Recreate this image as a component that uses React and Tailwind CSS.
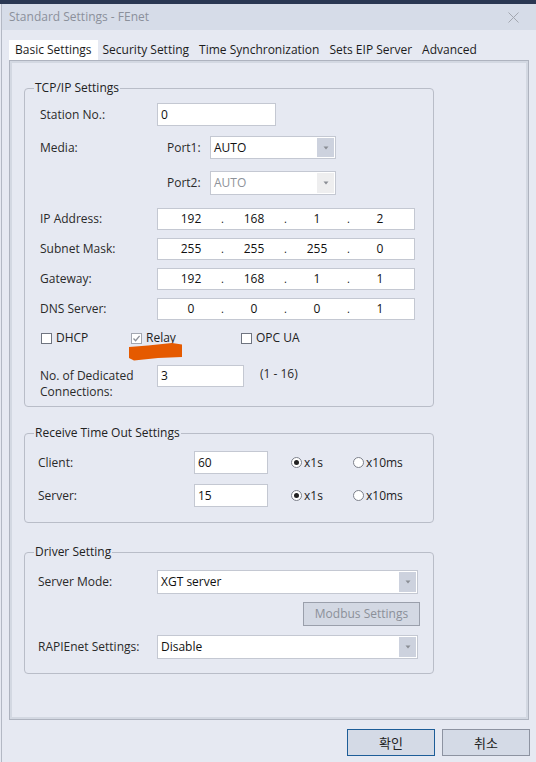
import React from 'react'

const tabs = ['Basic Settings', 'Security Setting', 'Time Synchronization', 'Sets EIP Server', 'Advanced']

function TextBox({ value, className = '' }) {
  return (
    <div className={`h-full border border-[#c4c8d2] bg-white pl-[3px] flex items-center text-[#111] ${className}`}>
      {value}
    </div>
  )
}

function Select({ value, disabled, className = '' }) {
  return (
    <div className={`h-full border border-[#c4c8d2] bg-white flex items-center p-px ${className}`}>
      <span className={`flex-1 pl-[2px] ${disabled ? 'text-[#8e9299]' : 'text-[#111]'}`}>{value}</span>
      <span className={`w-[17px] h-full flex items-center justify-center ${disabled ? 'bg-[#eeeeef]' : 'bg-[#cdd2de]'}`}>
        <svg width="6" height="4" viewBox="0 0 6 4">
          <path d="M0.5 0.5 L5.5 0.5 L3 3.5 Z" fill="#8a8d94" />
        </svg>
      </span>
    </div>
  )
}

function IpBox({ parts }) {
  return (
    <div className="h-full w-[258px] border border-[#c4c8d2] bg-white flex items-center pl-[15px] text-[#111]">
      {parts.map((p, i) => (
        <React.Fragment key={i}>
          {i > 0 && <span className="w-[27px] text-center text-[11px]">.</span>}
          <span className="w-[36px] text-center">{p}</span>
        </React.Fragment>
      ))}
    </div>
  )
}

function Check({ label, checked, className = '' }) {
  return (
    <div className={`flex items-center ${className}`}>
      <span className={`w-[11px] h-[11px] border bg-white flex items-center justify-center ${checked ? 'border-[#a3a7b1]' : 'border-[#6f7480]'}`}>
        {checked && (
          <svg width="9" height="9" viewBox="0 0 9 9">
            <path d="M1.5 4.5 L3.6 6.7 L7.6 1.8" fill="none" stroke="#8c9099" strokeWidth="1.3" />
          </svg>
        )}
      </span>
      <span className="ml-[4px] text-[#222]">{label}</span>
    </div>
  )
}

function Radio({ on, label, className = '' }) {
  return (
    <div className={`flex items-center ${className}`}>
      <span className="w-[11px] h-[11px] rounded-full border border-[#7d818b] bg-white flex items-center justify-center">
        {on && <span className="w-[5px] h-[5px] rounded-full bg-[#222]" />}
      </span>
      <span className="ml-[2px] text-[#222]">{label}</span>
    </div>
  )
}

function Group({ title, children, className = '', inner = '' }) {
  return (
    <fieldset className={`w-[410px] border border-[#b9bdc8] rounded-[4px] ${className}`}>
      <legend className="ml-[9px] px-[1px] leading-[16px] text-[#222]">{title}</legend>
      <div className={inner}>{children}</div>
    </fieldset>
  )
}

export default function App() {
  return (
    <div className="relative w-[536px] h-[762px] overflow-hidden bg-[#e6e9f2] text-[12px] leading-[16px] text-[#2a2a2a] font-['Open_Sans','Noto_Sans_CJK_KR',sans-serif]">
      <div className="h-[4px] bg-[#2a3752]" />
      <div className="h-[758px] border-l border-[#b3b8c4] ml-px">
        {/* title bar */}
        <div className="h-[26px] bg-[#d6dce8] flex items-center pl-[7px] pr-[17px]">
          <span className="flex-1 text-[12px] text-[#8b909b]">Standard Settings - FEnet</span>
          <svg width="11" height="11" viewBox="0 0 11 11">
            <path d="M0.5 0.5 L10.5 10.5 M10.5 0.5 L0.5 10.5" stroke="#a3a7b0" strokeWidth="1" />
          </svg>
        </div>

        {/* tabs */}
        <div className="pt-[10px] pl-[7px] flex h-[30px]">
          {tabs.map((t, i) => (
            <div
              key={t}
              className={`h-[20px] flex items-center text-[12px] text-[#1c1c1c] ${i === 0 ? 'bg-white px-[6px]' : 'px-[5px]'}`}
            >
              {t}
            </div>
          ))}
        </div>

        {/* panel */}
        <div className="ml-[7px] w-[520px] h-[660px] border border-[#aeb3bf] shadow-[inset_0_0_0_2px_#d3d8e2] pl-[14px] pt-[19px]">
          <Group title="TCP/IP Settings" inner="pl-[15px] pb-[6px]">
            <div className="mt-[7px] h-[23px] flex items-center">
              <span className="w-[117px]">Station No.:</span>
              <TextBox value="0" className="w-[119px]" />
            </div>
            <div className="mt-[10px] h-[23px] flex items-center">
              <span className="w-[127px]">Media:</span>
              <span className="w-[43px]">Port1:</span>
              <Select value="AUTO" className="w-[126px]" />
            </div>
            <div className="mt-[12px] h-[24px] flex items-center">
              <span className="w-[127px]" />
              <span className="w-[43px]">Port2:</span>
              <Select value="AUTO" disabled className="w-[126px]" />
            </div>
            {[
              ['IP Address:', ['192', '168', '1', '2'], 'mt-[13px]'],
              ['Subnet Mask:', ['255', '255', '255', '0'], 'mt-[8px]'],
              ['Gateway:', ['192', '168', '1', '1'], 'mt-[8px]'],
              ['DNS Server:', ['0', '0', '0', '1'], 'mt-[8px]'],
            ].map(([label, parts, mt]) => (
              <div key={label} className={`${mt} h-[22px] flex items-center`}>
                <span className="w-[117px]">{label}</span>
                <IpBox parts={parts} />
              </div>
            ))}
            <div className="mt-[12px] h-[12px] flex items-center pl-px">
              <Check label="DHCP" className="w-[90px]" />
              <Check label="Relay" checked className="w-[110px]" />
              <Check label="OPC UA" />
            </div>
            <div className="mt-[21px] flex items-start">
              <span className="w-[117px] pt-[3px] leading-[16px]">
                No. of Dedicated
                <br />
                Connections:
              </span>
              <div className="h-[22px] w-[87px]">
                <TextBox value="3" />
              </div>
              <span className="ml-[16px] pt-[1px]">(1 - 16)</span>
            </div>
          </Group>

          <Group title="Receive Time Out Settings" className="mt-[18px]" inner="pl-[13px] pb-[15px]">
            <div className="mt-[10px] h-[23px] flex items-center">
              <span className="w-[156px]">Client:</span>
              <TextBox value="60" className="w-[74px]" />
              <Radio on label="x1s" className="ml-[23px] w-[62px]" />
              <Radio label="x10ms" />
            </div>
            <div className="mt-[10px] h-[23px] flex items-center">
              <span className="w-[156px]">Server:</span>
              <TextBox value="15" className="w-[74px]" />
              <Radio on label="x1s" className="ml-[23px] w-[62px]" />
              <Radio label="x10ms" />
            </div>
          </Group>

          <Group title="Driver Setting" className="mt-[21px]" inner="pl-[13px] pb-[14px]">
            <div className="mt-[10px] h-[24px] flex items-center">
              <span className="w-[119px]">Server Mode:</span>
              <Select value="XGT server" className="w-[261px]" />
            </div>
            <div className="mt-[8px] h-[24px] flex">
              <button className="ml-[265px] w-[117px] h-full border border-[#9a9fab] bg-[#d3d8e3] text-[#8b9099] text-[12px]">
                Modbus Settings
              </button>
            </div>
            <div className="mt-[9px] h-[24px] flex items-center">
              <span className="w-[119px]">RAPIEnet Settings:</span>
              <Select value="Disable" className="w-[261px]" />
            </div>
          </Group>
        </div>

        {/* footer buttons */}
        <div className="pt-[9px] pr-[6px] flex justify-end gap-[7px]">
          <button className="w-[88px] h-[27px] border border-[#1d5d98] bg-[#d4dae6] text-[13px] text-[#222]">확인</button>
          <button className="w-[88px] h-[27px] border border-[#8d93a1] bg-[#d4dae6] text-[13px] text-[#222]">취소</button>
        </div>
      </div>

      {/* orange annotation mark */}
      <svg className="absolute left-[128px] top-[342px]" width="56" height="20" viewBox="0 0 56 20">
        <path d="M1 5 L20 3.5 L44 1 L54 2.5 L54 15 L30 16 L6 18.5 L1 16 Z" fill="#e55a00" />
      </svg>
    </div>
  )
}
